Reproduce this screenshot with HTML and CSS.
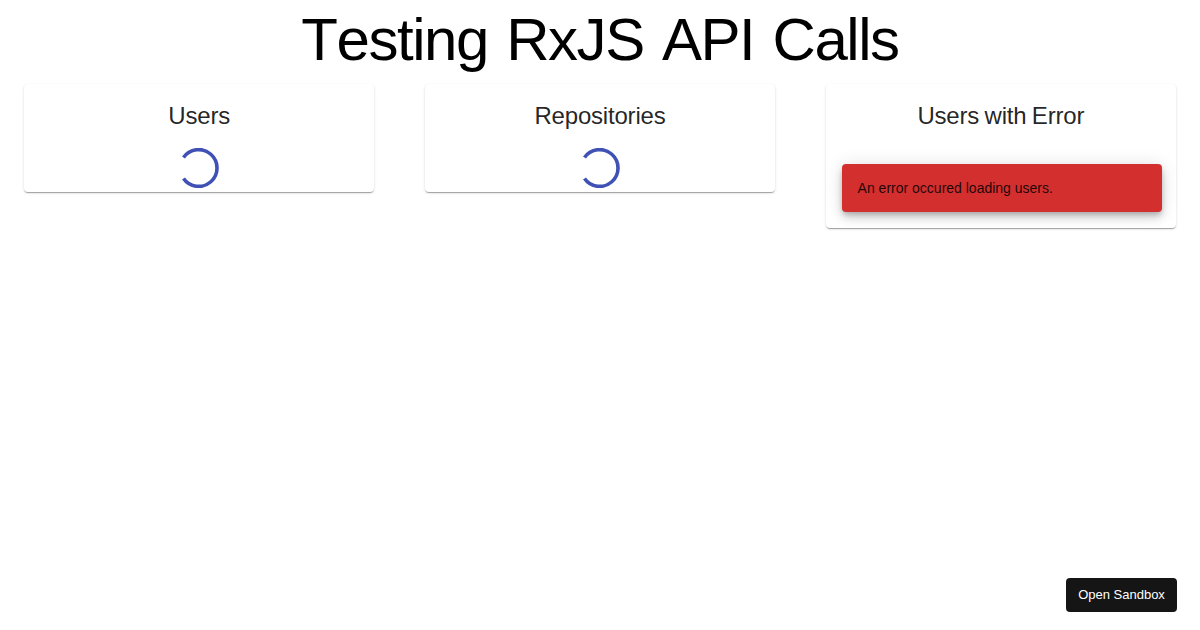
FILE: index.html
```html
<!DOCTYPE html>
<html lang="en">
<head>
    <meta charset="UTF-8">
    <title>Testing RxJS API Calls</title>
    <link rel="stylesheet" href="styles.css">
</head>
<body>

<h1 class="page-title">Testing RxJS API Calls</h1>

<div class="cards">
    <div class="card">
        <h5 class="card-title">Users</h5>
        <svg class="spinner" viewBox="0 0 40 40">
            <path d="M4.5 9.5 A18.4 18.4 0 1 1 4.5 30.5" />
        </svg>
    </div>
    <div class="card">
        <h5 class="card-title">Repositories</h5>
        <svg class="spinner" viewBox="0 0 40 40">
            <path d="M4.5 9.5 A18.4 18.4 0 1 1 4.5 30.5" />
        </svg>
    </div>
    <div class="card">
        <h5 class="card-title card-title-error">Users with Error</h5>
        <div class="alert">An error occured loading users.</div>
    </div>
</div>

<a class="sandbox-button" href="#">Open Sandbox</a>

</body>
</html>
```

FILE: styles.css
```css
body {
    margin: 0;
    min-height: 100vh;
    background-color: #fff;
    color: #000;
    font-family: "Liberation Sans", Arial, sans-serif;
}

.page-title {
    margin: 0;
    padding-top: 5px;
    font-size: 60px;
    line-height: 69px;
    font-weight: 400;
    font-kerning: none;
    letter-spacing: -1.45px;
    word-spacing: 3px;
    text-align: center;
}

.cards {
    display: flex;
    justify-content: space-between;
    align-items: flex-start;
    padding: 10px 24px 0;
}

.card {
    width: 350.4px;
    box-sizing: border-box;
    padding: 16px 16px 4px;
    display: flex;
    flex-direction: column;
    align-items: center;
    background-color: #fff;
    border-radius: 4px;
    box-shadow: 0 2px 1px -1px rgba(0, 0, 0, 0.2), 0 1px 1px 0 rgba(0, 0, 0, 0.14), 0 1px 3px 0 rgba(0, 0, 0, 0.12);
}

.card-title {
    margin: 0 0 16px;
    font-size: 24px;
    line-height: 32px;
    font-weight: 400;
    letter-spacing: -0.2px;
    word-spacing: -1px;
    color: rgba(0, 0, 0, 0.87);
}

.card-title-error {
    margin-bottom: 32px;
}

.spinner {
    display: block;
    width: 40px;
    height: 40px;
}
.spinner path {
    fill: none;
    stroke: #3f51b5;
    stroke-width: 3.6;
}

.alert {
    align-self: stretch;
    height: 48px;
    box-sizing: border-box;
    margin: 0 -2px 12px 0;
    padding: 0 16px;
    display: flex;
    align-items: center;
    background-color: #d32f2f;
    color: rgba(0, 0, 0, 0.87);
    font-size: 14px;
    border-radius: 4px;
    box-shadow: 0 3px 5px -1px rgba(0, 0, 0, 0.2), 0 6px 10px 0 rgba(0, 0, 0, 0.14), 0 1px 18px 0 rgba(0, 0, 0, 0.12);
}

.sandbox-button {
    position: fixed;
    right: 23px;
    bottom: 18px;
    width: 111px;
    height: 34px;
    padding-bottom: 2px;
    box-sizing: border-box;
    display: flex;
    align-items: center;
    justify-content: center;
    background-color: #151515;
    color: #fff;
    border-radius: 4px;
    font-size: 13px;
    text-decoration: none;
}
```
